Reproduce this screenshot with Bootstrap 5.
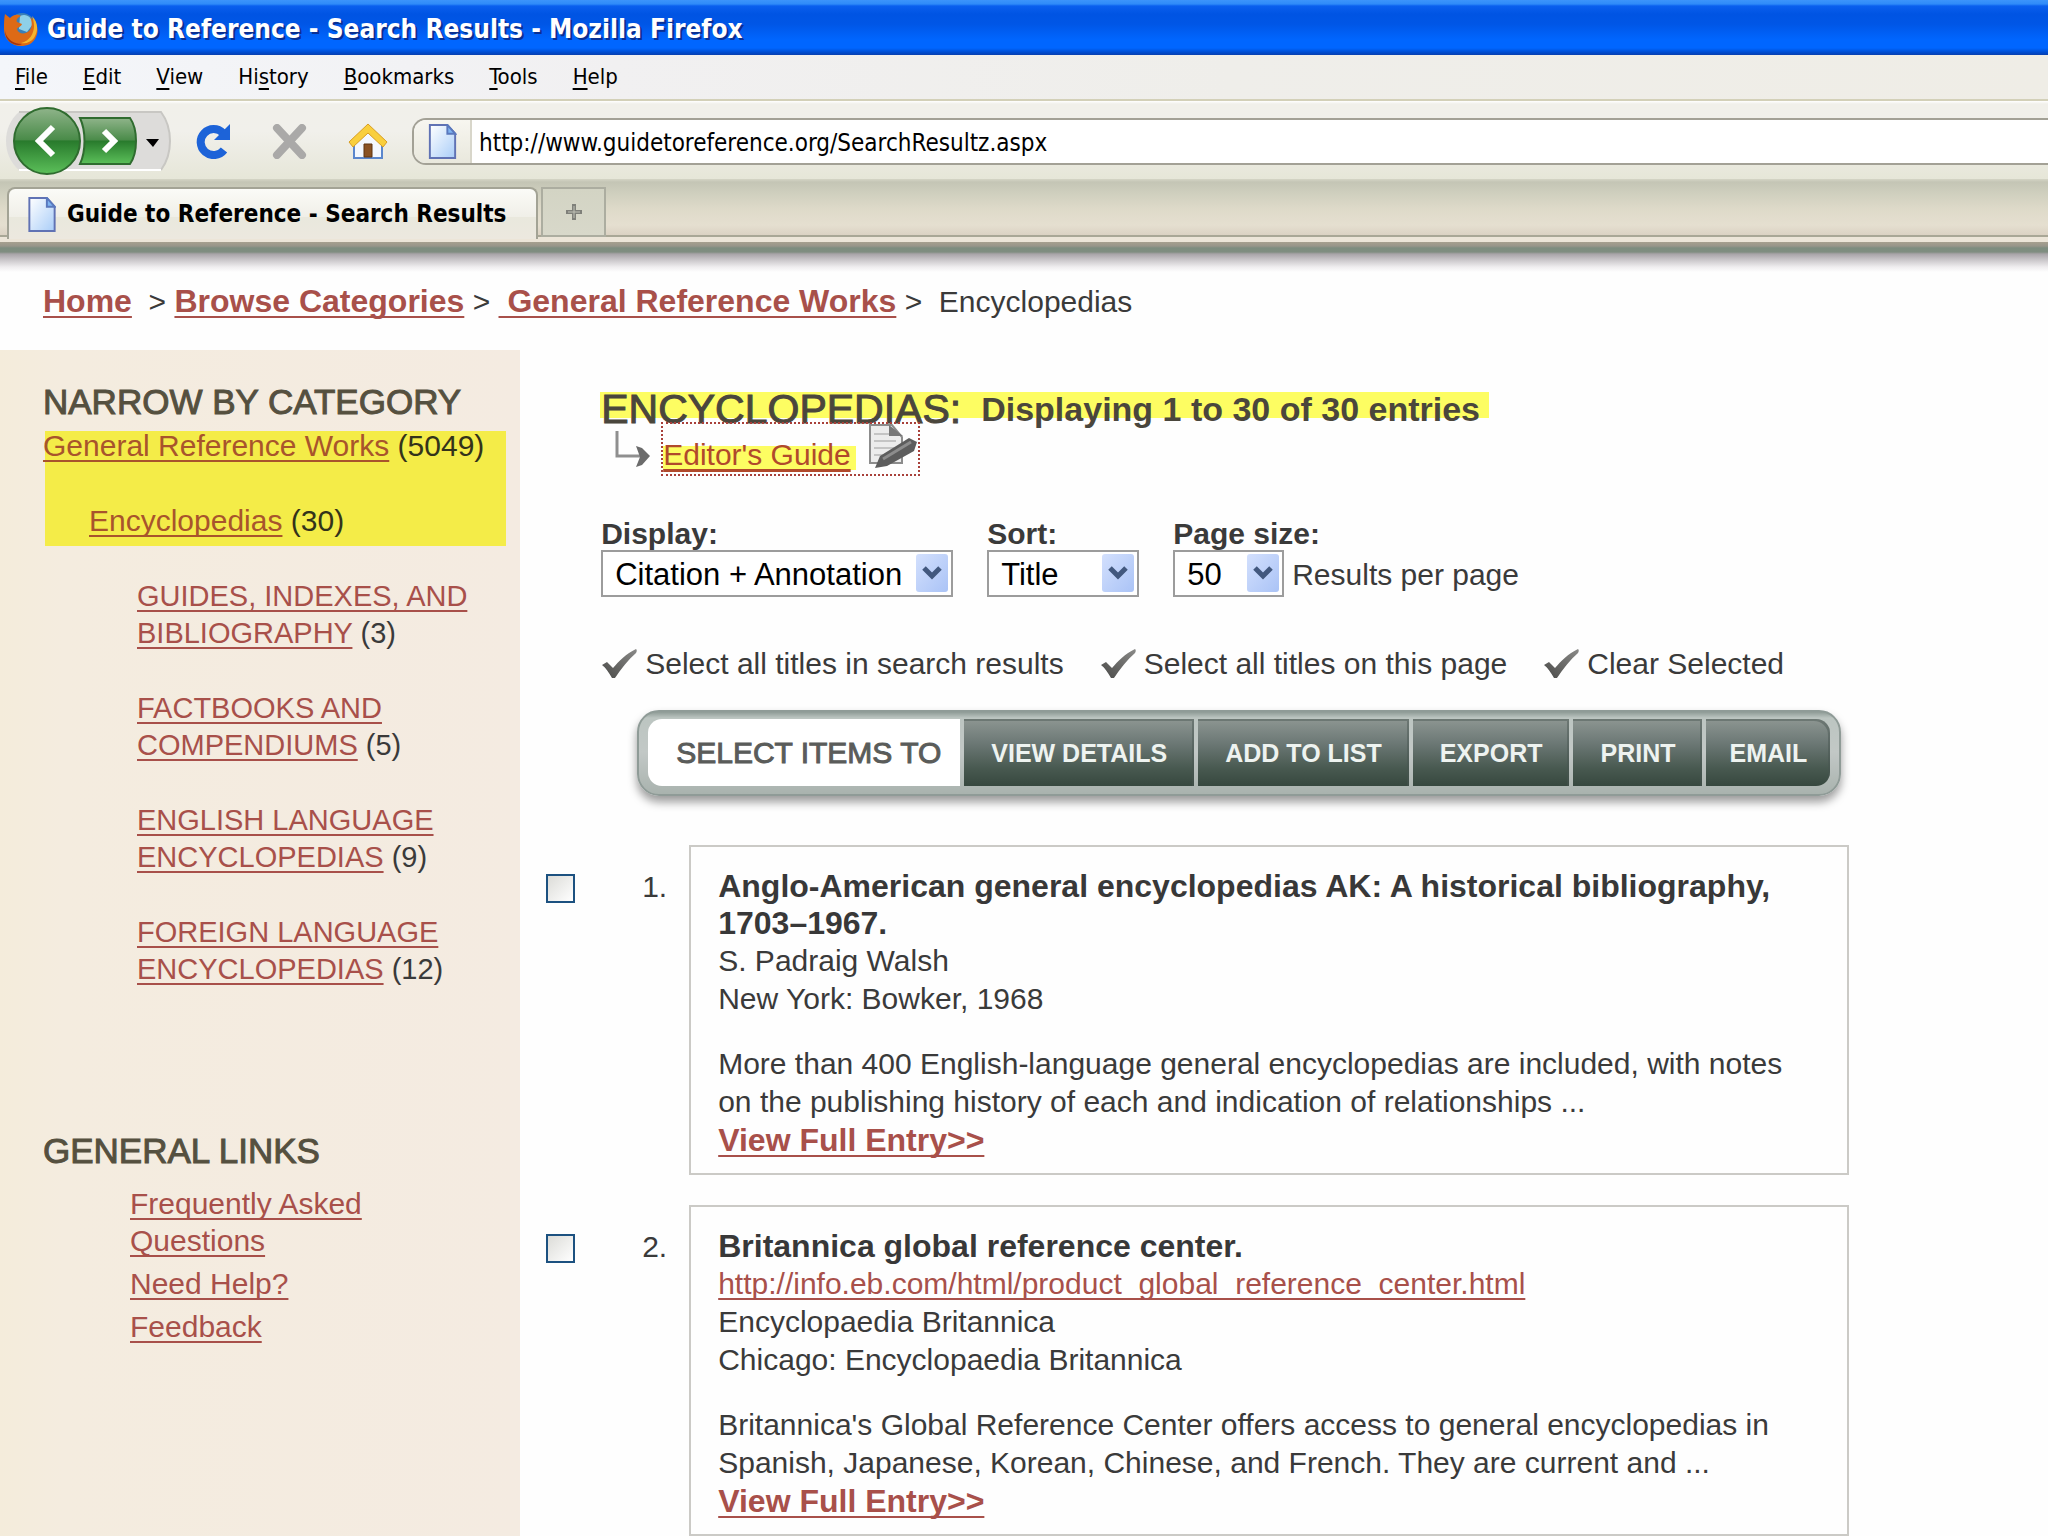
<!DOCTYPE html>
<html lang="en">
<head>
<meta charset="utf-8">
<meta name="viewport" content="width=device-width, initial-scale=1">
<title>Guide to Reference - Search Results</title>
<link rel="stylesheet" href="https://cdn.jsdelivr.net/npm/bootstrap@5.3.0/dist/css/bootstrap.min.css">
<style>
  body { background: #fefefe; color: #3a3a3a; font: 30px/38px "Liberation Sans", Arial, sans-serif; overflow-x: hidden; }
  a { color: #a8504a; text-decoration: underline; text-decoration-thickness: 2px; text-underline-offset: 4px; text-decoration-skip-ink: none; }
  a:hover { color: #7c2f2a; }
  button, input, select { color: inherit; font: inherit; }
  svg { display: block; flex-shrink: 0; }

  /* browser window */
  .chrome-ui { color: #000; font-family: "DejaVu Sans Condensed", "Noto Sans", sans-serif; }
  .titlebar { height: 55px; padding: 2px 0 0 3px; background: linear-gradient(#3c94fb 0, #2f8bf9 4px, #0a5fee 6px, #0054e3 14px, #0056e6 24px, #0066ff 40px, #0066ff 48px, #0048c8 53px, #0a3fae 55px); color: #fff; }
  .titlebar h1 { font-size: 26px; line-height: 32px; font-weight: 700; text-shadow: 2px 2px 0 #0a2f92; }
  .menubar { height: 46px; padding: 0 0 1px 15px; gap: 35px; font-size: 22px; line-height: 30px; background: linear-gradient(90deg, #f4f6fa, #f1f0f1 30%, #efeeea 60%, #efede6); border-bottom: 2px solid #d3d0b8; }
  .plain-btn { border: 0; background: none; padding: 0; }
  .menubar u { text-underline-offset: 4px; text-decoration-thickness: 2px; }
  .navbar-row { height: 78px; background: linear-gradient(#fff 0, #f1f0ea 3px, #f1f0eb 30px, #e6e6d8 100%); padding: 2px 0 0 5px; }
  .tools { margin-left: 25px; gap: 41px; }
  .urlbar { height: 47px; margin-left: 24px; border: 2px solid #a3a196; border-right: 0; border-radius: 14px 0 0 14px; background: #fff; overflow: hidden; }
  .urlbar .site-icon { width: 58px; background: linear-gradient(#f7f6f0, #e9e8dd); border-right: 2px solid #d8d6ca; }
  .urlbar input { border: 0; background: none; padding: 3px 7px 0; font-size: 24px; line-height: 30px; color: #000; min-width: 0; outline: 0; }
  .tabstrip { height: 58px; padding-top: 8px; background: linear-gradient(#d5d5c6 0, #c4c5b5 3px, #cfcfbe 14px, #dedac9 30px, #e5dfd0 46px, #dbd2c3 56px, #a9a796 56px); gap: 3px; }
  .page-tab { margin-left: 7px; width: 531px; height: 52px; padding: 0 0 0 19px; gap: 11px; border: 2px solid #a3a395; border-bottom: 0; border-radius: 8px 8px 0 0; background: linear-gradient(#fbfbf7, #f0efe8 55%, #e9e8dd 56%, #ece8df); font-size: 24px; font-weight: 700; line-height: 28px; white-space: nowrap; }
  .new-tab { width: 65px; height: 50px; border: 2px solid #acada0; background: linear-gradient(#d3d4c4, #d8d8ca); }
  .chrome-foot { height: 35px; background: linear-gradient(#ece5d8 0, #ece5d8 5px, #a6a08f 5px, #98968a 9px, #7d8d7f 11px, #7f8d80 15px, #a8a4a8 17px, #cac7ca 23px, #efedef 30px, #fefefe 35px); }

  /* site */
  .crumbs { padding: 10px 43px 29px; white-space: pre; }
  .crumbs a { font-weight: 700; font-size: 32px; }
  .side-col { flex: 0 0 25.4%; background: linear-gradient(90deg, #f4ecdb 0, #f4ecdf 12%, #f4ebe1 100%); padding-top: 33px; }
  .side-col h2 { font-size: 35px; line-height: 38px; margin: 0 0 6px; padding-left: 43px; color: #55503f; font-weight: 400; -webkit-text-stroke: 1px #55503f; white-space: nowrap; }
  .marked { margin: 0 14px 0 43px; padding-bottom: 6px; background: linear-gradient(transparent 4px, #f4ec48 4px) 2px 0 no-repeat; color: #33331a; }
  .marked a { color: #a8542c; }
  .marked .sub { padding: 37px 0 0 46px; }
  .cats { padding: 32px 20px 144px 137px; gap: 38px; line-height: 37px; font-size: 29px; }
  .general { padding: 9px 20px 0 130px; gap: 6px; line-height: 37px; }

  .main-col { padding-top: 39px; min-width: 0; }
  .indent { padding-left: 80px; }
  .result-head { margin: 0; padding: 0 9px 0 1px; gap: 20px; font-size: 41px; line-height: 40px; font-weight: 400; color: #4a463c; background: linear-gradient(transparent 3px, #fdfd62 3px, #fdfd62 29px, transparent 29px); }
  .result-head .name { -webkit-text-stroke: 1px #4a463c; }
  .result-head strong { font-size: 34px; }
  .guide-row { margin-top: -7px; padding-left: 94px; gap: 9px; position: relative; }
  .guide-link { height: 54px; border: 2px dotted #a8403a; gap: 12px; padding-bottom: 2px; text-decoration: none; }
  .guide-link span { text-decoration: underline; line-height: 38px; margin-top: 12px; padding-right: 5px; background: linear-gradient(transparent 10px, #fdfd62 10px, #fdfd62 34px, transparent 34px); color: #b0492c; text-underline-offset: 4px; }
  .options { margin-top: 43px; gap: 34px; padding-left: 81px; }
  .options label { display: block; font-weight: 700; line-height: 30px; margin-bottom: 1px; }
  .options select { appearance: none; height: 47px; line-height: 40px; font-size: 31px; border: 2px solid #9c9c9c; border-radius: 0; padding: 2px 12px 0; color: #000; background: #fff; display: block; }
  .per-page { padding-top: 3px; }
  .pick { position: relative; }
  .pick svg { position: absolute; right: 5px; bottom: 5px; pointer-events: none; }
  .w-display { width: 352px; } .w-sort { width: 152px; } .w-size { width: 111px; }
  .checks { margin-top: 48px; padding-left: 81px; gap: 36px; }
  .checks button { gap: 8px; line-height: 38px; }
  .action-bar { margin: 27px 0 49px 117px; height: 86px; padding: 7px 9px 8px; width: max-content; border-radius: 22px; background: linear-gradient(#8f9b96 0, #bcc5c1 6px, #c2c8c6 40px, #a9b3ae 100%); border: 2px solid #8f9b97; box-shadow: 0 6px 10px #9a9a9a; gap: 4px; }
  .action-bar .caption { font-size: 30px; line-height: 38px; color: #5a5c5a; -webkit-text-stroke: 1px #5a5c5a; background: #fff; border-radius: 14px 0 0 14px; padding: 0 19px 0 28px; }
  .action-bar button { border: 0; color: #eef3f0; font-size: 25px; font-weight: 700; background: linear-gradient(#8d9692, #6d7976 35%, #47584f 75%, #37483f); padding: 0 27px; box-shadow: inset -2px 2px 0 rgba(70,85,80,.45); }
  .action-bar button:last-child { border-radius: 0 14px 14px 0; padding: 0 23px; }

  .results { padding: 0 9.72vw 0 26px; gap: 30px; }
  .results input { appearance: none; width: 29px; height: 29px; margin: 29px 0 0; flex-shrink: 0; border: 2px solid #1c5180; background: linear-gradient(135deg, #dcdcd8, #fff); }
  .results .num { width: 114px; text-align: right; padding: 23px 22px 0 0; line-height: 37px; flex-shrink: 0; }
  .entry { border: 2px solid #cbcac6; padding: 21px 20px 14px 27px; flex-grow: 1; }
  .entry h3 { font-size: 32px; line-height: 37px; font-weight: 700; margin: 0; color: #383838; }
  .entry p { margin: 27px 0 0; }
  .entry .more { display: block; width: max-content; font-size: 32px; font-weight: 700; }
</style>
</head>
<body>
<svg width="0" height="0" class="position-absolute" aria-hidden="true">
  <defs>
    <linearGradient id="gBlue" x1="0" y1="0" x2="1" y2="1"><stop offset="0" stop-color="#fff"/><stop offset="1" stop-color="#a9cdf8"/></linearGradient>
    <linearGradient id="gGreen" x1="0" y1="0" x2="0" y2="1"><stop offset="0" stop-color="#8fb48a"/><stop offset=".48" stop-color="#4a8b49"/><stop offset=".5" stop-color="#287a2c"/><stop offset="1" stop-color="#5cc05a"/></linearGradient>
    <linearGradient id="gPick" x1="0" y1="0" x2="1" y2="1"><stop offset="0" stop-color="#d3e0fd"/><stop offset="1" stop-color="#aac3f6"/></linearGradient>
    <linearGradient id="gCheck" x1="1" y1="0" x2="0" y2="1"><stop offset="0" stop-color="#8a8a88"/><stop offset="1" stop-color="#4a4a48"/></linearGradient>
    <symbol id="page" viewBox="0 0 28 36"><path d="M1 1h18l8 9v25H1z" fill="url(#gBlue)" stroke="#6072b4" stroke-width="2"/><path d="M19 1v9h8z" fill="#7fb4f2" stroke="#5a78bd" stroke-width="2"/></symbol>
    <symbol id="drop" viewBox="0 0 32 38"><rect width="32" height="38" rx="3" fill="url(#gPick)"/><path d="M8 14l8 8 8-8" fill="none" stroke="#42587e" stroke-width="5"/></symbol>
    <symbol id="tick" viewBox="0 0 36 30"><path d="M1 16l5-3 6 6C18 12 25 5 35 0c1 1 1 2 0 4C27 11 20 20 14 29h-3C8 24 5 19 1 16z" fill="url(#gCheck)"/></symbol>
  </defs>
</svg>

<header class="chrome-ui">
  <div class="titlebar d-flex align-items-center">
    <svg width="36" height="36" viewBox="0 0 36 36" class="me-2"><circle cx="19" cy="15" r="13" fill="#3a7fb8"/><path d="M17 5c6-3 12 1 13 8l-6 8-8-3z" fill="#8ed0e8"/><path d="M2 3l5 4c4-4 8-4 11-2-4 2-5 4-4 6l5 2c-1 3-4 3-5 5 1 5 8 6 12 2 4-4 3-10 1-14 8 6 9 14 6 20-3 7-9 9-15 9C8 35 1 28 1 18 1 12 1 8 2 3z" fill="#dd6a16"/><path d="M29 5c7 7 6 16 2 22-3 4-8 6-13 5 9-2 13-10 13-17 0-4-1-7-2-10z" fill="#f6b52c"/><path d="M2 20c2 9 9 13 17 13-5 3-17-1-17-13z" fill="#a13312"/></svg>
    <h1 class="mb-0">Guide to Reference - Search Results - Mozilla Firefox</h1>
  </div>
  <nav class="menubar d-flex align-items-center" aria-label="Menu bar">
    <button class="plain-btn"><u>F</u>ile</button>
    <button class="plain-btn"><u>E</u>dit</button>
    <button class="plain-btn"><u>V</u>iew</button>
    <button class="plain-btn">Hi<u>s</u>tory</button>
    <button class="plain-btn"><u>B</u>ookmarks</button>
    <button class="plain-btn"><u>T</u>ools</button>
    <button class="plain-btn"><u>H</u>elp</button>
  </nav>
  <div class="navbar-row d-flex align-items-center">
    <button class="plain-btn" aria-label="Back and forward">
      <svg width="166" height="70" viewBox="0 0 166 70">
        <path d="M14 6h142c6 8 9 18 9 29s-3 21-9 29H14C5 56 1 46 1 35S5 14 14 6z" fill="#dddcda"/><path d="M14 6h142c6 8 9 18 9 29s-3 21-9 29" fill="none" stroke="#c8c7c3" stroke-width="2"/><path d="M14 64h142" stroke="#fff" stroke-width="2"/>
        <path d="M75 12h50c5 7 6 14 6 23s-1 16-6 23H75c6-13 6-33 0-46z" fill="url(#gGreen)" stroke="#2f6c2f" stroke-width="2"/>
        <circle cx="42" cy="35" r="33" fill="url(#gGreen)" stroke="#2f6c2f" stroke-width="2"/>
        <path d="M48 21L34 35l14 14" fill="none" stroke="#fff" stroke-width="6"/><path d="M99 25l10 10-10 10" fill="none" stroke="#fff" stroke-width="6"/>
        <path d="M141 33h13l-6 8z" fill="#000"/></svg>
    </button>
    <div class="tools d-flex align-items-center">
      <button class="plain-btn" aria-label="Reload"><svg width="35" height="35" viewBox="0 0 35 35"><path d="M28 26a13 13 0 1 1-1-17" fill="none" stroke="#1d63d8" stroke-width="8"/><path d="M34 0v16H18z" fill="#1d63d8"/></svg></button>
      <button class="plain-btn" aria-label="Stop"><svg width="35" height="35" viewBox="0 0 35 35"><path d="M5 4l25 27M30 4L5 31" stroke="#aaa9a8" stroke-width="8" stroke-linecap="round"/></svg></button>
      <button class="plain-btn" aria-label="Home"><svg width="40" height="36" viewBox="0 0 40 36"><path d="M6 18L20 6l14 12v17H6z" fill="#f4f8fe" stroke="#5b87cd" stroke-width="2"/><path d="M16 21h8v13h-8z" fill="#8a5222" stroke="#5e3410" stroke-width="1"/><path d="M20 1l19 18-4 5L20 10 5 24l-4-5z" fill="#f9cf3d" stroke="#d99e22" stroke-width="1"/></svg></button>
    </div>
    <div class="urlbar d-flex flex-grow-1">
      <span class="site-icon d-flex align-items-center justify-content-center"><svg width="29" height="35"><use href="#page"/></svg></span>
      <input class="flex-grow-1" type="text" aria-label="Address" value="http://www.guidetoreference.org/SearchResultz.aspx">
    </div>
  </div>
  <div class="tabstrip d-flex align-items-start">
    <button class="page-tab d-flex align-items-center"><svg width="28" height="35"><use href="#page"/></svg>Guide to Reference - Search Results</button>
    <button class="new-tab d-flex align-items-center justify-content-center p-0" aria-label="New tab"><svg width="18" height="18" viewBox="0 0 18 18"><path d="M9 1v16M1 9h16" stroke="#7f807a" stroke-width="4"/><path d="M9 3v12M3 9h12" stroke="#c0c1b6" stroke-width="1"/></svg></button>
  </div>
  <div class="chrome-foot"></div>
</header>

<nav class="crumbs" aria-label="Breadcrumb"><a href="#">Home</a>  &gt; <a href="#">Browse Categories</a> &gt; <a href="#"> General Reference Works</a> &gt;  Encyclopedias</nav>

<div class="d-flex">
  <aside class="side-col">
    <h2>NARROW BY CATEGORY</h2>
    <div class="marked">
      <div><a href="#">General Reference Works</a> (5049)</div>
      <div class="sub"><a href="#">Encyclopedias</a> (30)</div>
    </div>
    <div class="cats d-flex flex-column">
      <div><a href="#">GUIDES, INDEXES, AND<br>BIBLIOGRAPHY</a> (3)</div>
      <div><a href="#">FACTBOOKS AND<br>COMPENDIUMS</a> (5)</div>
      <div><a href="#">ENGLISH LANGUAGE<br>ENCYCLOPEDIAS</a> (9)</div>
      <div><a href="#">FOREIGN LANGUAGE<br>ENCYCLOPEDIAS</a> (12)</div>
    </div>
    <h2>GENERAL LINKS</h2>
    <div class="general d-flex flex-column align-items-start">
      <a href="#">Frequently Asked<br>Questions</a>
      <a href="#">Need Help?</a>
      <a href="#">Feedback</a>
    </div>
  </aside>

  <main class="main-col flex-grow-1">
    <div class="indent d-flex"><h2 class="result-head d-flex align-items-center"><span class="name">ENCYCLOPEDIAS:</span> <strong>Displaying 1 to 30 of 30 entries</strong></h2></div>
    <div class="guide-row d-flex align-items-center">
      <svg width="38" height="38" viewBox="0 0 38 38"><path d="M3 1v25h24" fill="none" stroke="#8f8f8f" stroke-width="3"/><path d="M22 16l6 2 8 8-8 9-6 2 4-10z" fill="#6b6b6b"/></svg>
      <a href="#" class="guide-link d-flex align-items-start"><span>Editor's Guide</span>
        <svg width="50" height="46" viewBox="0 0 50 46"><path d="M2 1h22l10 12v26H2z" fill="#ececec" stroke="#8c8c8c" stroke-width="2"/><path d="M6 10h15M6 17h22M6 24h20M6 31h12" stroke="#c4c4c4" stroke-width="2"/><path d="M21 1v11h14z" fill="#777"/><path d="M7 44l5-12 29-18 8 4-3 9-27 15z" fill="#5d5d5d"/><path d="M15 35l28-17" stroke="#8d8d8d" stroke-width="3"/></svg></a>
    </div>

    <form class="options d-flex align-items-end">
      <div class="pick"><label for="display">Display:</label><select id="display" class="w-display"><option>Citation + Annotation</option></select><svg width="32" height="38"><use href="#drop"/></svg></div>
      <div class="pick"><label for="sort">Sort:</label><select id="sort" class="w-sort"><option>Title</option></select><svg width="32" height="38"><use href="#drop"/></svg></div>
      <div><label for="size">Page size:</label><div class="d-flex align-items-center gap-2"><div class="pick"><select id="size" class="w-size"><option>50</option></select><svg width="32" height="38"><use href="#drop"/></svg></div><span class="per-page">Results per page</span></div></div>
    </form>

    <div class="checks d-flex">
      <button class="plain-btn d-flex align-items-center"><svg width="36" height="30"><use href="#tick"/></svg>Select all titles in search results</button>
      <button class="plain-btn d-flex align-items-center"><svg width="36" height="30"><use href="#tick"/></svg>Select all titles on this page</button>
      <button class="plain-btn d-flex align-items-center"><svg width="36" height="30"><use href="#tick"/></svg>Clear Selected</button>
    </div>

    <div class="action-bar d-flex">
      <span class="caption d-flex align-items-center">SELECT ITEMS TO</span>
      <button>VIEW DETAILS</button><button>ADD TO LIST</button><button>EXPORT</button><button>PRINT</button><button>EMAIL</button>
    </div>

    <div class="results d-flex flex-column">
      <div class="d-flex align-items-stretch">
        <input type="checkbox" id="r1" aria-label="Select entry 1"><label for="r1" class="num">1.</label>
        <article class="entry">
          <h3>Anglo-American general encyclopedias AK: A historical bibliography,<br>1703–1967.</h3>
          <div>S. Padraig Walsh</div>
          <div>New York: Bowker, 1968</div>
          <p>More than 400 English-language general encyclopedias are included, with notes<br>on the publishing history of each and indication of relationships ...</p>
          <a href="#" class="more">View Full Entry&gt;&gt;</a>
        </article>
      </div>
      <div class="d-flex align-items-stretch">
        <input type="checkbox" id="r2" aria-label="Select entry 2"><label for="r2" class="num">2.</label>
        <article class="entry">
          <h3>Britannica global reference center.</h3>
          <div><a href="#">http://info.eb.com/html/product_global_reference_center.html</a></div>
          <div>Encyclopaedia Britannica</div>
          <div>Chicago: Encyclopaedia Britannica</div>
          <p>Britannica's Global Reference Center offers access to general encyclopedias in<br>Spanish, Japanese, Korean, Chinese, and French. They are current and ...</p>
          <a href="#" class="more">View Full Entry&gt;&gt;</a>
        </article>
      </div>
    </div>
  </main>
</div>
<script src="https://cdn.jsdelivr.net/npm/bootstrap@5.3.0/dist/js/bootstrap.bundle.min.js"></script>
</body>
</html>
